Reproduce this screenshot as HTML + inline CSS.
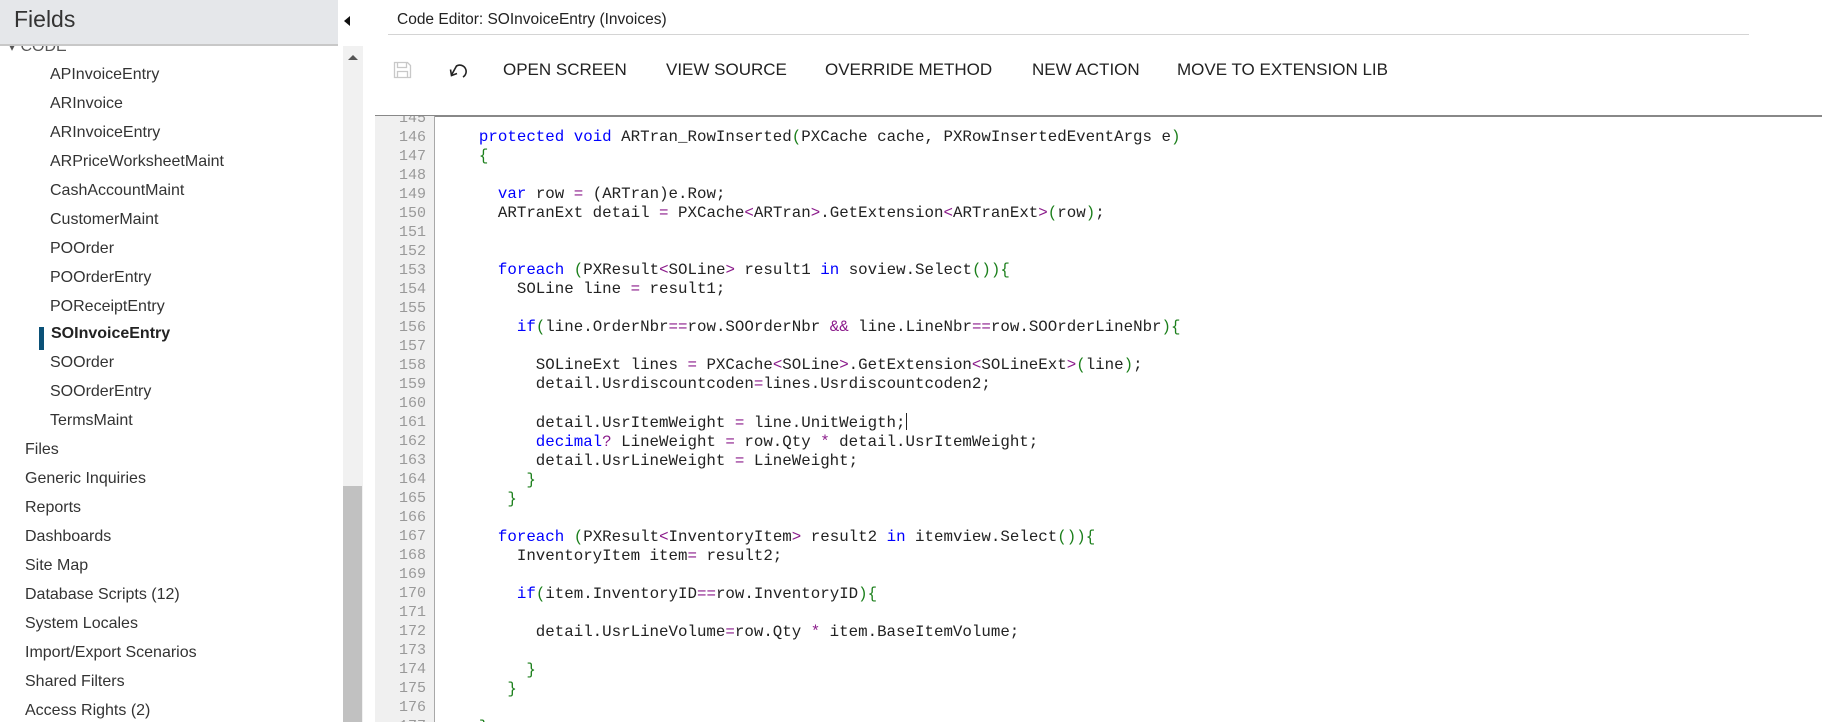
<!DOCTYPE html>
<html><head><meta charset="utf-8"><style>
*{margin:0;padding:0;box-sizing:border-box}
body{width:1822px;height:722px;overflow:hidden;background:#fff;font-family:"Liberation Sans",Arial,sans-serif;color:#333;position:relative}
.abs{position:absolute}
#hdr{left:0;top:0;width:338px;height:45px;background:#e5e7ea;border-bottom:1px solid #c8c8c8;z-index:2}
#hdr span{position:absolute;left:14px;top:6px;font-size:23px;color:#333}
.it{position:absolute;font-size:16px;line-height:20px;white-space:nowrap;color:#333}
#sb{left:343px;top:46px;width:20px;height:676px;background:#f1f1f1}
#thumb{left:343px;top:486px;width:19px;height:236px;background:#c1c1c1}
.tb{position:absolute;top:60px;font-size:17px;line-height:20px;color:#222;white-space:nowrap}
#gut{left:375px;top:116px;width:60px;height:606px;background:#f0f0f0;border-right:1px solid #a8a8a8;overflow:hidden}
#code{left:436px;top:116px;width:1386px;height:606px;overflow:hidden}
.ln{position:absolute;right:8px;width:50px;text-align:right;font-family:"Liberation Mono",monospace;font-size:15px;line-height:19px;color:#999}
pre{position:absolute;left:5px;font-family:"Liberation Mono",monospace;font-size:15.8px;line-height:19px;color:#222}
.k{color:#0000ff}.p{color:#1b7f1b}.o{color:#8a1a8a}
.cur{display:inline-block;width:1px;height:17px;background:#222;vertical-align:-3px}
</style></head><body>
<div id="hdr" class="abs"><span>Fields</span></div>
<div class="abs" style="left:338px;top:0;width:25px;height:45px;background:#fff"></div>
<div class="abs" style="left:344px;top:16px;width:0;height:0;border-top:5px solid transparent;border-bottom:5px solid transparent;border-right:6px solid #111"></div>
<div class="abs" style="left:0;top:45px;width:338px;height:1px;background:#c8c8c8;z-index:3"></div>
<div class="it" style="left:8px;top:37px;font-size:16px;color:#555">▾ CODE</div>
<div class="it" style="left:50px;top:65px">APInvoiceEntry</div>
<div class="it" style="left:50px;top:94px">ARInvoice</div>
<div class="it" style="left:50px;top:123px">ARInvoiceEntry</div>
<div class="it" style="left:50px;top:152px">ARPriceWorksheetMaint</div>
<div class="it" style="left:50px;top:181px">CashAccountMaint</div>
<div class="it" style="left:50px;top:210px">CustomerMaint</div>
<div class="it" style="left:50px;top:239px">POOrder</div>
<div class="it" style="left:50px;top:268px">POOrderEntry</div>
<div class="it" style="left:50px;top:297px">POReceiptEntry</div>
<div class="abs" style="left:39px;top:327px;width:5px;height:23px;background:#0b5177"></div>
<div class="it" style="left:51px;top:324px;font-weight:bold;color:#222">SOInvoiceEntry</div>
<div class="it" style="left:50px;top:353px">SOOrder</div>
<div class="it" style="left:50px;top:382px">SOOrderEntry</div>
<div class="it" style="left:50px;top:411px">TermsMaint</div>
<div class="it" style="left:25px;top:440px">Files</div>
<div class="it" style="left:25px;top:469px">Generic Inquiries</div>
<div class="it" style="left:25px;top:498px">Reports</div>
<div class="it" style="left:25px;top:527px">Dashboards</div>
<div class="it" style="left:25px;top:556px">Site Map</div>
<div class="it" style="left:25px;top:585px">Database Scripts (12)</div>
<div class="it" style="left:25px;top:614px">System Locales</div>
<div class="it" style="left:25px;top:643px">Import/Export Scenarios</div>
<div class="it" style="left:25px;top:672px">Shared Filters</div>
<div class="it" style="left:25px;top:701px">Access Rights (2)</div>
<div id="sb" class="abs"></div>
<div id="thumb" class="abs"></div>
<div class="abs" style="left:348px;top:55px;width:0;height:0;border-left:5px solid transparent;border-right:5px solid transparent;border-bottom:5px solid #555"></div>

<div class="abs" style="left:397px;top:11px;font-size:15.5px;color:#222;white-space:nowrap">Code Editor: SOInvoiceEntry (Invoices)</div>
<div class="abs" style="left:388px;top:34px;width:1361px;height:1px;background:#d4d4d4"></div>
<svg class="abs" style="left:393px;top:61px" width="19" height="18" viewBox="0 0 19 18"><path d="M1.5 1.5h13l3 3v12h-16z M4.5 1.5v5h9v-5 M4.5 16.5v-6h10v6" fill="none" stroke="#c8c8c8" stroke-width="1.3"/></svg>
<svg class="abs" style="left:448px;top:61px" width="20" height="18" viewBox="0 0 20 18"><path d="M3.5 14 L8.5 5 A5.5 5.5 0 1 1 15 16" fill="none" stroke="#222" stroke-width="1.6"/><path d="M2.5 8.5 L3.5 14.5 L9 12.5" fill="none" stroke="#222" stroke-width="1.6"/></svg>
<div class="tb" style="left:503px">OPEN SCREEN</div>
<div class="tb" style="left:666px">VIEW SOURCE</div>
<div class="tb" style="left:825px">OVERRIDE METHOD</div>
<div class="tb" style="left:1032px">NEW ACTION</div>
<div class="tb" style="left:1177px">MOVE TO EXTENSION LIB</div>

<div class="abs" style="left:375px;top:115px;width:1447px;height:2px;background:#888"></div>
<div id="gut" class="abs"><div class="ln" style="top:-7px">145<br>146<br>147<br>148<br>149<br>150<br>151<br>152<br>153<br>154<br>155<br>156<br>157<br>158<br>159<br>160<br>161<br>162<br>163<br>164<br>165<br>166<br>167<br>168<br>169<br>170<br>171<br>172<br>173<br>174<br>175<br>176<br>177</div></div>
<div id="code" class="abs"><pre style="top:-7px">

    <span class="k">protected</span> <span class="k">void</span> ARTran_RowInserted<span class="p">(</span>PXCache cache, PXRowInsertedEventArgs e<span class="p">)</span>
    <span class="p">{</span>

      <span class="k">var</span> row <span class="o">=</span> (ARTran)e.Row;
      ARTranExt detail <span class="o">=</span> PXCache<span class="o">&lt;</span>ARTran<span class="o">&gt;</span>.GetExtension<span class="o">&lt;</span>ARTranExt<span class="o">&gt;</span><span class="p">(</span>row<span class="p">)</span>;


      <span class="k">foreach</span> <span class="p">(</span>PXResult<span class="o">&lt;</span>SOLine<span class="o">&gt;</span> result1 <span class="k">in</span> soview.Select<span class="p">()){</span>
        SOLine line <span class="o">=</span> result1;

        <span class="k">if</span><span class="p">(</span>line.OrderNbr<span class="o">==</span>row.SOOrderNbr <span class="o">&amp;&amp;</span> line.LineNbr<span class="o">==</span>row.SOOrderLineNbr<span class="p">){</span>

          SOLineExt lines <span class="o">=</span> PXCache<span class="o">&lt;</span>SOLine<span class="o">&gt;</span>.GetExtension<span class="o">&lt;</span>SOLineExt<span class="o">&gt;</span><span class="p">(</span>line<span class="p">)</span>;
          detail.Usrdiscountcoden<span class="o">=</span>lines.Usrdiscountcoden2;

          detail.UsrItemWeight <span class="o">=</span> line.UnitWeigth;<span class="cur"></span>
          <span class="k">decimal</span><span class="o">?</span> LineWeight <span class="o">=</span> row.Qty <span class="o">*</span> detail.UsrItemWeight;
          detail.UsrLineWeight <span class="o">=</span> LineWeight;
         <span class="p">}</span>
       <span class="p">}</span>

      <span class="k">foreach</span> <span class="p">(</span>PXResult<span class="o">&lt;</span>InventoryItem<span class="o">&gt;</span> result2 <span class="k">in</span> itemview.Select<span class="p">()){</span>
        InventoryItem item<span class="o">=</span> result2;

        <span class="k">if</span><span class="p">(</span>item.InventoryID<span class="o">==</span>row.InventoryID<span class="p">){</span>

          detail.UsrLineVolume<span class="o">=</span>row.Qty <span class="o">*</span> item.BaseItemVolume;

         <span class="p">}</span>
       <span class="p">}</span>

    <span class="p">}</span>
</pre></div>
</body></html>
